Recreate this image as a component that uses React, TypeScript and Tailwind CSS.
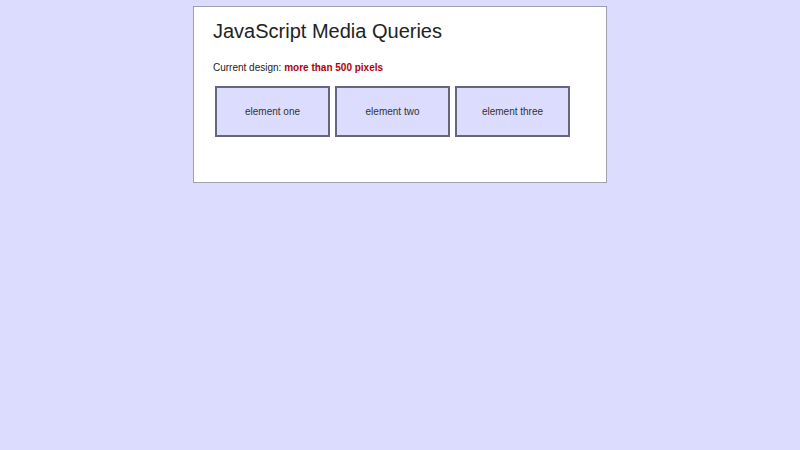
export default function App() {
  const items = ["element one", "element two", "element three"];

  return (
    <div
      className="min-h-[450px] w-full bg-[#dcdcff] pt-[6px]"
      style={{ fontFamily: '"Liberation Sans", Arial, sans-serif' }}
    >
      <div className="ml-[193px] h-[177px] w-[414px] border border-[#a0a0b0] bg-white px-[19px]">
        <h1 className="mt-[12px] text-[20px] leading-[24px] text-[#222]">
          JavaScript Media Queries
        </h1>
        <p className="mt-[19px] text-[10px] leading-[12px] text-[#222]">
          Current design:{" "}
          <span className="font-bold text-[#b0000a]">more than 500 pixels</span>
        </p>
        <div className="mt-[12px] flex gap-[5px] pl-[2px]">
          {items.map((label) => (
            <div
              key={label}
              className="flex h-[51px] w-[115px] items-center justify-center border-2 border-[#66667a] bg-[#dcdcff] text-[10px] text-[#333]"
            >
              {label}
            </div>
          ))}
        </div>
      </div>
    </div>
  );
}
